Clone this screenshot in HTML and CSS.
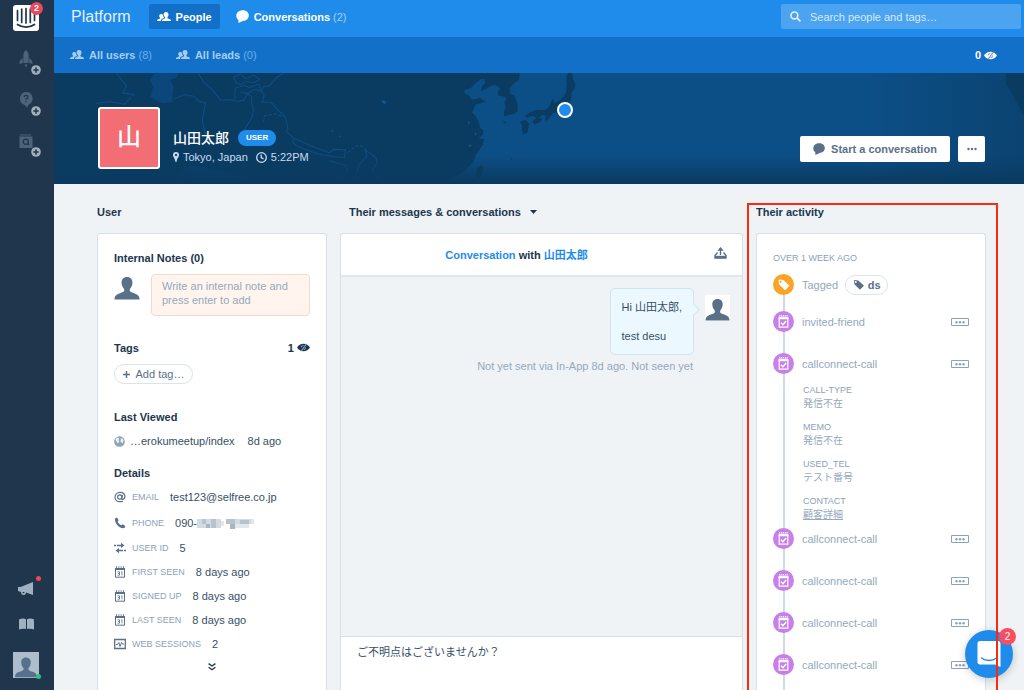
FILE: index.html
```html
<!DOCTYPE html>
<html lang="ja">
<head>
    <meta charset="UTF-8">
    <meta name="viewport" content="width=device-width, initial-scale=1.0">
    <title>Platform - People</title>
    <link rel="stylesheet" href="styles.css">
</head>
<body>
    <!-- shared icons -->
    <svg class="sprite" aria-hidden="true">
        <symbol id="i-people" viewBox="0 0 14 12">
            <path d="M9 1c1.700 0 2.600 1.200 2.500 2.700-.1 1.400-.7 2-1.100 2.600v1l3 1.200c.5.300.6.700.6 1.500H5c0-.8.1-1.200.6-1.500l2.500-1.200v-1C7.500 5.700 6.700 5 6.600 3.700 6.500 2.200 7.400 1 9 1z"/>
            <path d="M4.300 3c.7 0 1.300.3 1.600.8 0 1 .4 1.900 1 2.600v.5L5 7.700C4.300 8.100 4 8.900 4 10H0c0-.8.1-1.200.6-1.500l2.500-1v-.8C2.500 6.200 2.200 5.600 2.200 5c0-1.200.8-2 2.100-2z"/>
        </symbol>
        <symbol id="i-bubble" viewBox="0 0 12 12">
            <path d="M6.300.3c3.200 0 5.500 2 5.500 4.800S9.600 10 6.500 10c-1.400.9-3 1.600-4.500 1.700.3-.9.400-1.700.3-2.500C1 8.300.3 6.900.3 5.200.3 2.300 3 .3 6.300.3z"/>
        </symbol>
        <symbol id="i-eye" viewBox="0 0 12 8">
            <path d="M6 .5C8.600.5 10.700 2 12 4 10.700 6 8.600 7.500 6 7.500S1.300 6 0 4C1.300 2 3.400.5 6 .5z"/>
            <path class="eye-slash" d="M8.800.6 3.800 7.400M3.800 3.800A2.200 2.200 0 0 1 6 2.200M8 4A2.200 2.200 0 0 1 6.200 6"/>
        </symbol>
        <symbol id="i-person" viewBox="0 0 24 22">
            <path d="M12 0c3.500 0 5.300 2.400 5.200 5.600-.1 2.600-1 4.600-2.500 5.900v2c.6 1 2.600 1.500 5.300 2.500 2.800 1 4 2.800 4 5.500H0c0-2.700 1.200-4.500 4-5.500 2.700-1 4.700-1.500 5.300-2.500v-2C7.800 10.200 6.900 8.200 6.800 5.600 6.700 2.400 8.500 0 12 0z"/>
        </symbol>
        <symbol id="i-plus" viewBox="0 0 10 10">
            <circle cx="5" cy="5" r="4.800" fill="#9fb0c0"/>
            <path d="M5 2.300v5.400M2.300 5h5.400" stroke="#20364c" stroke-width="1.500"/>
        </symbol>
        <symbol id="i-calendar" viewBox="0 0 12 12">
            <path d="M1.500 3.500h9v7.700h-9z" fill="none" stroke="currentColor"/>
            <path d="M1 2h10v2H1zM2 .3h1v1.400H2zM4.300.3h1v1.400h-1zM6.700.3h1v1.400h-1zM9 .3h1v1.400H9z"/>
            <path d="M3.500 5.800h2v3.400h-2M4 7.500h1.500M7 6.300l1-.6v3.800" fill="none" stroke="currentColor" stroke-width=".8"/>
        </symbol>
        <symbol id="i-event" viewBox="0 0 21 21">
            <circle cx="10.500" cy="10.500" r="10.500" fill="#c87fe9"/>
            <path d="M6.200 7.500h8.600v8.700H6.200z" fill="none" stroke="#fff" stroke-width="1.200"/>
            <path d="M5.600 5.700h9.800v2.600H5.600zM6.300 4h1v1.300h-1zM8.200 4h1v1.300h-1zM10 4h1v1.300h-1zM11.900 4h1v1.300h-1zM13.700 4h1v1.300h-1z" fill="#fff"/>
            <path d="M8 11.800l1.900 1.900 3.200-3.800" fill="none" stroke="#fff" stroke-width="1.500"/>
        </symbol>
        <symbol id="i-tag" viewBox="0 0 12 12">
            <path fill-rule="evenodd" d="M1 1.800 1.800 1l4 .5 5.700 5.300c.3.300.3.700 0 1L8 11.300c-.3.300-.7.300-1 0L1.500 5.800zM3 2.200a1 1 0 1 0 .1 0z"/>
        </symbol>
        <symbol id="i-more" viewBox="0 0 18 8">
            <path d="M.5.500h17v7H.5z" fill="none" stroke="currentColor"/>
            <circle cx="5.500" cy="4.300" r="1.200"/><circle cx="9" cy="4.300" r="1.200"/><circle cx="12.500" cy="4.300" r="1.200"/>
        </symbol>
    </svg>

    <div class="app">
        <nav class="sidebar" aria-label="Products">
            <a href="#" class="side-logo" aria-label="Home">
                <svg width="26" height="26" viewBox="0 0 26 26">
                    <rect width="26" height="26" rx="3" fill="#fff"/>
                    <path d="M4.500 5.500v10M8.700 4v13.500M13 3.500v14.500M17.300 4v13.500M21.500 5.500v10" stroke="#20364c" stroke-width="1.700" stroke-linecap="round"/>
                    <path d="M4.500 19.500c4.500 3.400 12.500 3.400 17 0" fill="none" stroke="#20364c" stroke-width="1.700" stroke-linecap="round"/>
                </svg>
                <span class="badge">2</span>
            </a>
            <a href="#" class="side-item" aria-label="Engage">
                <svg width="14" height="18" viewBox="0 0 14 18" fill="#4c637b">
                    <path d="M7 0c2 1.600 2.800 3.800 2.700 6L9.500 13h-5L4.300 6C4.200 3.800 5 1.600 7 0zM3.800 8v5L.5 14c0-2 .3-3.200 1-4zM10.200 8v5l3.300 1c0-2-.3-3.200-1-4zM5.500 14.500h3L7 17.500z"/>
                </svg>
                <svg class="plus"><use href="#i-plus"/></svg>
            </a>
            <a href="#" class="side-item" aria-label="Learn">
                <svg width="14" height="18" viewBox="0 0 14 18">
                    <path d="M7 1a6.600 6.600 0 0 1 2.500 12.700L8 16.500l-2.500-2.700A6.600 6.600 0 0 1 7 1z" fill="#4c637b"/>
                    <path d="M5.200 6.200C5.200 5 6 4.400 7 4.400s1.900.7 1.900 1.700C8.900 7.500 7 7.500 7 9M7 10v1.200" fill="none" stroke="#20364c" stroke-width="1.300"/>
                </svg>
                <svg class="plus"><use href="#i-plus"/></svg>
            </a>
            <a href="#" class="side-item" aria-label="Educate">
                <svg width="14" height="18" viewBox="0 0 14 18">
                    <path d="M1 2.500h11v1H1zM.5 4.500h13V16H.5z" fill="#4c637b"/>
                    <circle cx="6.800" cy="9.700" r="2.600" fill="none" stroke="#20364c" stroke-width="1.200"/>
                    <path d="M8.700 11.600l1.600 1.600" stroke="#20364c" stroke-width="1.200"/>
                </svg>
                <svg class="plus"><use href="#i-plus"/></svg>
            </a>
            <div class="side-bottom">
                <a href="#" class="side-news" aria-label="News">
                    <svg width="16" height="14" viewBox="0 0 16 14" fill="#9fb0c0">
                        <path fill-rule="evenodd" d="M15 0v13L8 10.400c0 1.500-1 2.600-2.500 2.600S3 12 3 10L0 9V5h2.500L15 0zM4.500 10c0 1.800 2 1.800 2 0z"/>
                    </svg>
                </a>
                <a href="#" aria-label="Docs">
                    <svg width="15" height="12" viewBox="0 0 15 12" fill="#9fb0c0">
                        <path d="M0 1.500C2 .5 5 .2 7 1.200V11C5 10.500 2 10.700 0 11.500zM8 1.200c2-1 5-.7 7 .3v10c-2-.8-5-1-7-.5z"/>
                    </svg>
                </a>
                <a href="#" class="side-me" aria-label="My account">
                    <svg width="22" height="21"><use href="#i-person"/></svg>
                </a>
            </div>
        </nav>

        <div class="main">
            <header class="topbar">
                <h1>Platform</h1>
                <a href="#" class="tab active"><svg width="14" height="12"><use href="#i-people"/></svg>People</a>
                <a href="#" class="tab"><svg width="13" height="13"><use href="#i-bubble"/></svg>Conversations <span>(2)</span></a>
                <label class="search">
                    <svg width="11" height="11" viewBox="0 0 10 10" fill="none" stroke="#e3f0fd" stroke-width="1.500">
                        <circle cx="4" cy="4" r="3.100"/><path d="M6.300 6.300l3.200 3.200"/>
                    </svg>
                    <input type="text" placeholder="Search people and tags…" aria-label="Search people and tags">
                </label>
            </header>

            <nav class="subnav">
                <a href="#"><svg width="14" height="12"><use href="#i-people"/></svg>All users <span>(8)</span></a>
                <a href="#"><svg width="14" height="12"><use href="#i-people"/></svg>All leads <span>(0)</span></a>
                <div class="watching">0 <svg width="13" height="9"><use href="#i-eye"/></svg></div>
            </nav>

            <section class="hero">
                <svg class="map" viewBox="0 0 970 110" preserveAspectRatio="xMidYMid slice" aria-hidden="true">
                    <rect width="970" height="110" fill="#0c4f87"/>
                    <!-- land -->
                    <g fill="#0a3c62">
                        <path d="M948 0l-1 9 19 34h4V0z"/>
                        <g transform="translate(286 -3) scale(.33333)">
                            <path d="M-860 0H540L538 28 520 42 510 55 510 70 524 76 533 100 534 122 525 130 508 134 494 138 492 124 498 112 494 98 500 84 490 78 476 76 474 66 482 54 466 44 450 50 436 58 424 62 428 48 438 38 434 27 422 28 406 42 394 54 376 60 376 70 390 76 396 88 410 86 420 82 430 90 440 92 426 98 410 102 398 126 410 138 418 156 422 172 432 180 430 192 418 202 434 206 430 222 420 238 410 252 402 272 386 290 368 306 350 316 330 322 322 340H-860z"/>
                            <path d="M684 6L696 12 698 28 706 44 702 58 694 68 692 90 682 110 670 130 640 128 630 138 620 152 614 148 618 136 606 134 594 146 580 136 558 142 556 136 570 126 590 118 614 120 624 114 632 98 636 86 642 90 642 100 656 92 670 78 678 64 680 44 678 24z"/>
                            <path d="M540 154L556 148 568 160 562 186 550 192 546 178 548 168zM576 154L590 142 606 144 602 154 584 162zM412 292L428 282 432 294 420 322 410 314zM490 152L502 154 494 160zM512 262l6 2-4 4z"/>
                        </g>
                    </g>
                    <!-- borders and lakes -->
                    <g transform="translate(46 -3) scale(.33333)">
                        <path fill="#0b477b" d="M175 8h70l-4 14-20 8 10 20-5 45-30 5-34-20 8-30-10-20z"/>
                        <path fill="#0b477b" opacity=".6" d="M240 310L280 285 330 290 390 305 440 320 430 335 370 340 290 335z"/>
                        <g fill="none" stroke="#0e4f86" stroke-width="3">
                            <path d="M232 86L262 74 290 78 308 94 326 98 316 148 326 196 344 216M434 200L440 180 452 160 464 140 468 116 462 96 464 80 450 70 440 90 420 94 400 88 370 90 348 60 320 36 304 10"/>
                            <path d="M560 8L540 20 516 46 498 50 492 62 500 76 494 96 520 96 540 118 562 138 570 170 566 184 590 204 640 226 694 246 706 236 742 238 738 260 708 258 660 250 600 228 584 214 590 204"/>
                            <path d="M410 20L430 12 444 26 470 16 486 28 470 38 446 34 430 44 416 38zM414 54L440 46 456 52 484 42 492 62 470 58 450 70 430 66M414 54L412 86"/>
                            <path stroke-dasharray="10 5" d="M498 154L502 136 534 130 560 140M748 246L768 230 784 222 800 236"/>
                            <path d="M800 236L812 246 832 260 836 276 822 296 838 326M770 322L782 282 806 256 800 236M694 270L742 284 748 300 730 324M60 8L90 48 80 68 116 74M0 100L40 94 84 102 104 82"/>
                        </g>
                        <path fill="#0e5a9c" d="M848 90l12 2 2 10-8-2zM700 178l6 4-4 3zM724 194l6 4-6 2zM1106 222l12 2-6 6zM1106 152l6 6-6 2zM1128 184l4 8-6 2z"/>
                    </g>
                </svg>
                <span class="pin"></span>
                <div class="profile">
                    <div class="avatar">山</div>
                    <div class="who">
                        <h2>山田太郎 <span class="pill">USER</span></h2>
                        <p>
                            <svg width="6" height="10" viewBox="0 0 6 10" fill="#c5ddf3"><path fill-rule="evenodd" d="M3 0a3 3 0 0 1 3 3c0 2-2 3-2.500 7h-1C2 6 0 5 0 3a3 3 0 0 1 3-3zm0 1.800a1.200 1.200 0 1 0 .1 0z"/></svg>
                            <span>Tokyo, Japan</span>
                            <svg width="11" height="11" viewBox="0 0 11 11" fill="none" stroke="#c5ddf3" stroke-width="1.300"><circle cx="5.500" cy="5.500" r="4.800"/><path d="M5.200 2.500v3.200l2.300 1.200"/></svg>
                            <span>5:22PM</span>
                        </p>
                    </div>
                    <div class="actions">
                        <button type="button" class="btn start"><svg width="12" height="12"><use href="#i-bubble"/></svg>Start a conversation</button>
                        <button type="button" class="btn dots" aria-label="More">
                            <svg width="10" height="4" viewBox="0 0 10 4"><circle cx="1.500" cy="2" r="1.200"/><circle cx="5" cy="2" r="1.200"/><circle cx="8.500" cy="2" r="1.200"/></svg>
                        </button>
                    </div>
                </div>
            </section>

            <div class="columns">
                <section class="column">
                    <h3>User</h3>
                    <div class="card user-card">
                        <h4>Internal Notes (0)</h4>
                        <div class="note">
                            <svg width="26" height="23"><use href="#i-person"/></svg>
                            <textarea placeholder="Write an internal note and press enter to add" aria-label="Internal note"></textarea>
                        </div>
                        <h4 class="tags-title">Tags <span>1 <svg width="13" height="9"><use href="#i-eye"/></svg></span></h4>
                        <button type="button" class="add-tag">
                            <svg width="7" height="7" viewBox="0 0 7 7" stroke="#5a7089" stroke-width="1.400"><path d="M3.500 0v7M0 3.500h7"/></svg>Add tag…
                        </button>
                        <h4 class="viewed-title">Last Viewed</h4>
                        <p class="viewed">
                            <svg width="11" height="11" viewBox="0 0 11 11"><circle cx="5.500" cy="5.500" r="5.300" fill="#8ba2b9"/><path d="M1.500 3l2-1.500 1.700 1L4.500 4l.8 1.500L4 7.500 2.500 5.500zM7 2l2 1 .5 2-1.200 2.500L6.500 5.500z" fill="#eef3f8"/></svg>
                            <a href="#">…erokumeetup/index</a> <span>8d ago</span>
                        </p>
                        <h4 class="details-title">Details</h4>
                        <dl class="details">
                            <div class="tall"><svg width="12" height="12" viewBox="0 0 12 12" fill="none" stroke="currentColor" stroke-width="1.200"><circle cx="5.800" cy="6" r="2.200"/><path d="M8.400 3.800 7.700 7.300c-.1 1 .4 1.200 1 1.100 1.200-.2 2.300-1.400 2.200-3C10.700 2.800 8.600 1.300 6.200 1.300 3.300 1.300 1 3.400 1 6.200 1 9 3 10.700 5.800 10.700c1.200 0 2.200-.3 3-.8"/></svg><dt>EMAIL</dt><dd>test123@selfree.co.jp</dd></div>
                            <div class="tall"><svg width="12" height="12" viewBox="0 0 12 12"><path d="M1 1.500 3 .5l1.700 2.700-1 1.300c.6 1.600 1.800 2.900 3.500 3.700l1.500-1 2.600 1.800-.8 2c-4.600 1.200-10-4.500-9.500-9.500z"/></svg><dt>PHONE</dt><dd>090-<svg class="mosaic" width="57" height="10" viewBox="0 0 57 10"><path fill="#d3dae1" d="M0 0h24v9H0zM29 0h25v5H29z"/><path fill="#b8c2cc" d="M5 0h4v5H5zM14 0h5v9h-5zM29 0h9v5h-9zM43 1h9v4h-9z"/><path fill="#a9b5c0" d="M33 5h5v5h-5zM9 5h4v4H9z"/><path fill="#e2e7ec" d="M24 2h3v5h-3zM38 5h14v4H38zM54 0h3v5h-3z"/></svg></dd></div>
                            <div><svg width="12" height="12" viewBox="0 0 12 12" fill="none" stroke="currentColor" stroke-width="1.300"><path d="M0 3.500h2m1 0h5M4 8.500h5m1 0h2"/><path d="M7 .8 10.500 3.500 7 6zM5 6 1.500 8.500 5 11.200z" fill="currentColor" stroke="none"/></svg><dt>USER ID</dt><dd>5</dd></div>
                            <div><svg width="12" height="12"><use href="#i-calendar"/></svg><dt>FIRST SEEN</dt><dd>8 days ago</dd></div>
                            <div><svg width="12" height="12"><use href="#i-calendar"/></svg><dt>SIGNED UP</dt><dd>8 days ago</dd></div>
                            <div><svg width="12" height="12"><use href="#i-calendar"/></svg><dt>LAST SEEN</dt><dd>8 days ago</dd></div>
                            <div><svg width="12" height="12" viewBox="0 0 12 12" fill="none" stroke="currentColor"><path d="M.7 1.500h10.600v9H.7z" stroke-width="1.300"/><path d="M2 6.500h1.500l1.300-2 1.200 4 1.500-4 .9 1.500H10"/></svg><dt>WEB SESSIONS</dt><dd>2</dd></div>
                        </dl>
                        <button type="button" class="expand" aria-label="Show more">
                            <svg width="8" height="8" viewBox="0 0 8 8" fill="none" stroke="#20364c" stroke-width="1.400"><path d="M.6.700 4 3 7.400.700M.6 4.300 4 6.700l3.400-2.400"/></svg>
                        </button>
                    </div>
                </section>

                <section class="column">
                    <h3 class="indent">Their messages &amp; conversations <svg width="7" height="4" viewBox="0 0 7 4"><path d="M0 0h7L3.500 4z"/></svg></h3>
                    <div class="card conversation">
                        <div class="conv-head">
                            <p><a href="#">Conversation</a> with <a href="#">山田太郎</a></p>
                            <button type="button" aria-label="Export">
                                <svg width="13" height="12" viewBox="0 0 13 12" fill="none" stroke="#5a7089" stroke-width="1.400"><path d="M3.500 5.500 1 8.500V11h11V8.500L9.500 5.500M6.500 3v5"/><path d="M6.500 0l3.200 3.700H3.300z" fill="#5a7089" stroke="none"/><path d="M1 10h11" stroke-width="2.400"/></svg>
                            </button>
                        </div>
                        <div class="conv-body">
                            <div class="message">
                                <div class="bubble"><p>Hi 山田太郎,</p><p>test desu</p></div>
                                <div class="sender"><svg width="25" height="22"><use href="#i-person"/></svg></div>
                            </div>
                            <p class="status">Not yet sent via In-App 8d ago. Not seen yet</p>
                        </div>
                        <div class="composer">ご不明点はございませんか？</div>
                    </div>
                </section>

                <section class="column activity">
                    <h3>Their activity</h3>
                    <div class="card">
                        <h5>OVER 1 WEEK AGO</h5>
                        <ul class="timeline">
                            <li class="tagged">
                                <svg class="dot" viewBox="0 0 21 21"><circle cx="10.500" cy="10.500" r="10.500" fill="#f9a427"/><path transform="translate(4.500 4.500)" fill="#fff" fill-rule="evenodd" d="M1 1.800 1.800 1l4 .5 5.700 5.300c.3.300.3.700 0 1L8 11.300c-.3.300-.7.300-1 0L1.500 5.800zM3 2.200a1 1 0 1 0 .1 0z"/></svg>
                                <span>Tagged</span>
                                <a href="#" class="tag"><svg width="11" height="11"><use href="#i-tag"/></svg>ds</a>
                            </li>
                            <li><svg class="dot"><use href="#i-event"/></svg><span>invited-friend</span><button type="button" aria-label="Details"><svg width="18" height="8"><use href="#i-more"/></svg></button></li>
                            <li class="open">
                                <svg class="dot"><use href="#i-event"/></svg><span>callconnect-call</span><button type="button" aria-label="Details"><svg width="18" height="8"><use href="#i-more"/></svg></button>
                                <dl>
                                    <dt>CALL-TYPE</dt><dd>発信不在</dd>
                                    <dt>MEMO</dt><dd>発信不在</dd>
                                    <dt>USED_TEL</dt><dd>テスト番号</dd>
                                    <dt>CONTACT</dt><dd><a href="#">顧客詳細</a></dd>
                                </dl>
                            </li>
                            <li><svg class="dot"><use href="#i-event"/></svg><span>callconnect-call</span><button type="button" aria-label="Details"><svg width="18" height="8"><use href="#i-more"/></svg></button></li>
                            <li><svg class="dot"><use href="#i-event"/></svg><span>callconnect-call</span><button type="button" aria-label="Details"><svg width="18" height="8"><use href="#i-more"/></svg></button></li>
                            <li><svg class="dot"><use href="#i-event"/></svg><span>callconnect-call</span><button type="button" aria-label="Details"><svg width="18" height="8"><use href="#i-more"/></svg></button></li>
                            <li><svg class="dot"><use href="#i-event"/></svg><span>callconnect-call</span><button type="button" aria-label="Details"><svg width="18" height="8"><use href="#i-more"/></svg></button></li>
                        </ul>
                    </div>
                    <div class="highlight"></div>
                </section>
            </div>
        </div>

        <button type="button" class="launcher" aria-label="Open messenger">
            <svg width="24" height="26" viewBox="0 0 24 26"><path d="M3 0h18c1.500 0 2.500 1 2.500 2.500V26L18 23.500H3C1.500 23.500.5 22.500.5 21V2.500C.5 1 1.500 0 3 0z" fill="#fff"/><path d="M4.500 17c4 3.300 11 3.300 15 0" fill="none" stroke="#1f8ceb" stroke-width="1.400" stroke-linecap="round"/></svg>
            <span class="badge">2</span>
        </button>
    </div>
</body>
</html>
```

FILE: styles.css
```css
* {
    box-sizing: border-box;
}

body, h1, h2, h3, h4, h5, p, ul, dl, dd {
    margin: 0;
    padding: 0;
}

body {
    font-family: "Liberation Sans", "Noto Sans CJK JP", sans-serif;
    font-size: 11px;
    line-height: 18px;
    color: #364f66;
    fill: currentColor;
    background-color: #eff3f6;
}

a {
    color: inherit;
    text-decoration: none;
}

button {
    padding: 0;
    border: none;
    background: none;
    font: inherit;
    cursor: pointer;
}

svg {
    flex: none;
}

.sprite {
    position: absolute;
    width: 0;
    height: 0;
}

.app {
    display: flex;
    height: 100vh;
    overflow: hidden;
}

/* left bar */
.sidebar {
    width: 54px;
    flex: none;
    display: flex;
    flex-direction: column;
    align-items: center;
    padding: 5px 2px 0 0;
    background-color: #20364c;
}

.side-logo {
    position: relative;
    height: 26px;
    margin-bottom: 19px;
}

.badge {
    position: absolute;
    top: -3px;
    right: -4px;
    width: 13px;
    height: 13px;
    border-radius: 50%;
    background-color: #e9495a;
    color: white;
    font-size: 9px;
    font-weight: bold;
    line-height: 13px;
    text-align: center;
}

.side-item {
    position: relative;
    height: 24px;
    margin-bottom: 17px;
}

.plus {
    position: absolute;
    left: 12px;
    top: 15px;
    width: 10px;
    height: 10px;
}

.side-bottom {
    display: flex;
    flex-direction: column;
    align-items: center;
    gap: 22px;
    margin-top: auto;
    padding-bottom: 12px;
}

.side-bottom a {
    display: flex;
    position: relative;
}

.side-news::after, .side-me::after {
    content: "";
    position: absolute;
    width: 5px;
    height: 5px;
    border-radius: 50%;
}

.side-news::after {
    top: -6px;
    right: -7px;
    background-color: #f4444e;
}

.side-me {
    width: 26px;
    height: 26px;
    align-items: flex-end;
    justify-content: center;
    background-color: #aebdcc;
    color: #57708c;
}

.side-me::after {
    right: -2px;
    bottom: -1px;
    background-color: #2fbf7f;
}

.main {
    flex: 1;
    min-width: 0;
    display: flex;
    flex-direction: column;
}

/* top bars */
.topbar {
    display: flex;
    align-items: flex-start;
    flex: none;
    height: 37px;
    padding: 4px 3px 0 17px;
    background-color: #1f8ceb;
    color: white;
}

.topbar h1 {
    margin-right: 18px;
    font-size: 16px;
    font-weight: normal;
    line-height: 25px;
    color: #e3f0fd;
}

.tab {
    display: flex;
    align-items: center;
    gap: 3px;
    height: 25px;
    margin-right: 8px;
    padding: 0 8px;
    border-radius: 2px;
    font-weight: bold;
}

.tab.active {
    background-color: #1370c8;
}

.tab svg, .subnav a svg {
    margin-right: 2px;
}

.tab span, .subnav a span {
    font-weight: normal;
    color: #a5d1f8;
}

.search {
    display: flex;
    align-items: center;
    gap: 9px;
    width: 240px;
    height: 25px;
    margin-left: auto;
    padding: 0 9px;
    border-radius: 2px;
    background-color: #4ca3f0;
}

.search input {
    width: 100%;
    padding: 0;
    border: none;
    outline: none;
    background: none;
    color: white;
    font: inherit;
}

.search input::placeholder {
    color: #d6eafc;
}

.subnav {
    display: flex;
    align-items: center;
    flex: none;
    gap: 24px;
    height: 36px;
    padding: 0 27px 0 16px;
    background-color: #1370c8;
    color: #a5cdf2;
    font-weight: bold;
}

.subnav a, .watching {
    display: flex;
    align-items: center;
    gap: 3px;
}

.subnav a span {
    color: #6cafe8;
}

.watching {
    margin-left: auto;
    color: white;
}

.eye-slash {
    fill: none;
    stroke: #7d9dbb;
    stroke-width: 1;
}

/* profile header with map */
.hero {
    position: relative;
    flex: none;
    height: 111px;
    overflow: hidden;
    background-color: #0a3c62;
}

.map {
    position: absolute;
    width: 100%;
    height: 100%;
}

.hero::after {
    content: "";
    position: absolute;
    inset: 0;
    background: linear-gradient(to top, #0a3a60 0, transparent 30px), linear-gradient(to left, #0a3c6299 0, transparent 160px);
}

.pin {
    position: absolute;
    left: calc(50% + 18px);
    top: 29px;
    z-index: 1;
    width: 16px;
    height: 16px;
    border: 2px solid white;
    border-radius: 50%;
    background-color: #1f8ceb;
}

.profile {
    position: relative;
    z-index: 1;
    display: flex;
    align-items: flex-start;
    padding: 34px 39px 0 44px;
}

.avatar {
    width: 62px;
    height: 62px;
    border: 2px solid white;
    border-radius: 3px;
    background-color: #f36d74;
    color: white;
    font-size: 24px;
    font-weight: 500;
    line-height: 56px;
    text-align: center;
}

.who {
    margin: 21px 0 0 13px;
    color: #c5ddf3;
}

.who h2 {
    display: flex;
    align-items: center;
    gap: 9px;
    color: white;
    font-size: 14px;
    font-weight: 500;
    line-height: 20px;
}

.pill {
    height: 16px;
    padding: 0 8px;
    border-radius: 8px;
    background-color: #1f8ceb;
    font-size: 8px;
    font-weight: bold;
    line-height: 16px;
}

.who p {
    display: flex;
    align-items: center;
    gap: 4px;
}

.who p span {
    margin-right: 4px;
}

.actions {
    display: flex;
    gap: 8px;
    margin: 29px 0 0 auto;
}

.btn {
    display: flex;
    align-items: center;
    justify-content: center;
    height: 26px;
    border-radius: 2px;
    background-color: white;
    color: #5a7089;
    font-weight: bold;
}

.start {
    gap: 6px;
    width: 150px;
}

.dots {
    width: 27px;
}

/* the three columns */
.columns {
    flex: 1;
    min-height: 0;
    display: grid;
    grid-template-columns: 230px minmax(0, 1fr) 230px;
    gap: 13px;
    padding: 19px 38px 0 43px;
}

.column {
    position: relative;
    display: flex;
    flex-direction: column;
    min-height: 0;
}

.column h3 {
    margin-bottom: 12px;
    color: #20364c;
    font-size: 11px;
    line-height: 18px;
}

.indent {
    padding-left: 9px;
}

.indent svg {
    margin-left: 6px;
    vertical-align: 2px;
}

.card {
    flex: 1;
    min-height: 0;
    padding: 15px 16px 0;
    border: 1px solid #d5e0e7;
    border-bottom: none;
    border-radius: 3px 3px 0 0;
    background-color: white;
}

.card h4 {
    color: #20364c;
    font-size: 11px;
    line-height: 18px;
}

.note {
    display: flex;
    justify-content: space-between;
    margin: 7px 0 23px;
    color: #5a7089;
}

.note svg {
    margin-top: 3px;
}

.note textarea {
    width: 159px;
    height: 42px;
    padding: 4px 10px;
    border: 1px solid #efdcc8;
    border-radius: 4px;
    background-color: #fff5ee;
    font: inherit;
    line-height: 14px;
    resize: none;
}

.note textarea::placeholder {
    color: #94a9bc;
}

.tags-title {
    display: flex;
    justify-content: space-between;
}

.add-tag {
    display: flex;
    align-items: center;
    justify-content: center;
    gap: 6px;
    width: 79px;
    height: 20px;
    margin: 7px 0 24px;
    border: 1px solid #d9e4eb;
    border-radius: 10px;
    color: #5a7089;
}

.viewed {
    display: flex;
    align-items: center;
    gap: 5px;
    margin: 6px 0 14px;
}

.viewed span {
    margin-left: 8px;
}

.details {
    margin-top: 2px;
}

.details div {
    display: flex;
    align-items: center;
    height: 24px;
    color: #5a7089;
}

.details .tall {
    height: 26px;
}

.details dt {
    margin: 0 11px 0 6px;
    color: #8ba2b9;
    font-size: 9px;
}

.details dd {
    color: #364f66;
}

.mosaic {
    vertical-align: -2px;
}

.expand {
    display: block;
    height: 22px;
    margin: 0 auto;
}

/* conversation */
.conversation {
    display: flex;
    flex-direction: column;
    padding: 0;
}

.conv-head {
    display: flex;
    align-items: center;
    height: 43px;
    padding-right: 15px;
    border-bottom: 2px solid #dfe8ed;
    color: #20364c;
    font-weight: bold;
}

.conv-head p {
    flex: 1;
    padding-right: 22px;
    text-align: center;
}

.conv-head a {
    color: #1f8ceb;
}

.conv-body {
    flex: 1;
    padding: 11px 12px 0;
    background-color: #eff3f6;
}

.message {
    display: flex;
    justify-content: flex-end;
    gap: 11px;
}

.bubble {
    position: relative;
    height: 67px;
    padding: 9px 11px;
    border: 1px solid #cfe4ee;
    border-radius: 5px;
    background-color: #ecf8ff;
}

.bubble p + p {
    margin-top: 11px;
}

.bubble::after {
    content: "";
    position: absolute;
    top: 16px;
    right: -5px;
    width: 8px;
    height: 8px;
    border: solid #cfe4ee;
    border-width: 1px 1px 0 0;
    background-color: #ecf8ff;
    transform: rotate(45deg);
}

.sender {
    display: flex;
    align-items: flex-end;
    width: 25px;
    height: 26px;
    margin-top: 7px;
    background-color: white;
    color: #5a7089;
}

.status {
    margin: 2px 37px 0 0;
    color: #94a9bc;
    text-align: right;
}

.composer {
    height: 54px;
    padding: 6px 16px;
    border-top: 1px solid #d5e0e7;
}

/* activity */
.activity h5 {
    color: #8ba2b9;
    font-size: 9px;
    font-weight: normal;
    line-height: 18px;
}

.timeline {
    margin-top: 7px;
    color: #94a9bc;
    list-style: none;
}

.timeline li {
    position: relative;
    display: flex;
    flex-wrap: wrap;
    align-items: center;
    align-content: flex-start;
    height: 42px;
}

.timeline .tagged {
    height: 37px;
}

.timeline .open {
    height: 175px;
}

.timeline li::before {
    content: "";
    position: absolute;
    left: 10px;
    width: 2px;
    height: 100%;
    background-color: #cfd9e1;
}

.dot {
    position: relative;
    width: 21px;
    height: 21px;
    margin-right: 8px;
}

.timeline button {
    display: flex;
    margin-left: auto;
    color: #8ba2b9;
}

.tag {
    display: flex;
    align-items: center;
    justify-content: center;
    gap: 4px;
    width: 43px;
    height: 20px;
    margin-left: 7px;
    border: 1px solid #d9e4eb;
    border-radius: 10px;
    color: #5a7089;
    font-weight: bold;
}

.timeline dl {
    width: 100%;
    padding: 9px 0 0 30px;
    line-height: 14px;
}

.timeline dt {
    color: #8ba2b9;
    font-size: 9px;
}

.timeline dd {
    margin-bottom: 9px;
    font-size: 10px;
}

.timeline dd a {
    text-decoration: underline;
}

.highlight {
    position: absolute;
    inset: 0 -12px -10px -9px;
    z-index: 3;
    border: 2px solid #fb2a10;
    pointer-events: none;
}

.launcher {
    position: absolute;
    right: 11px;
    bottom: 12px;
    z-index: 2;
    display: flex;
    align-items: center;
    justify-content: center;
    width: 48px;
    height: 48px;
    border-radius: 50%;
    background-color: #1f8ceb;
    box-shadow: 0 2px 8px rgba(0, 0, 0, 0.2);
}

.launcher .badge {
    top: -2px;
    right: -3px;
    width: 17px;
    height: 17px;
    background-color: #fb4d60;
    font-size: 10px;
    font-weight: normal;
    line-height: 17px;
}
```
